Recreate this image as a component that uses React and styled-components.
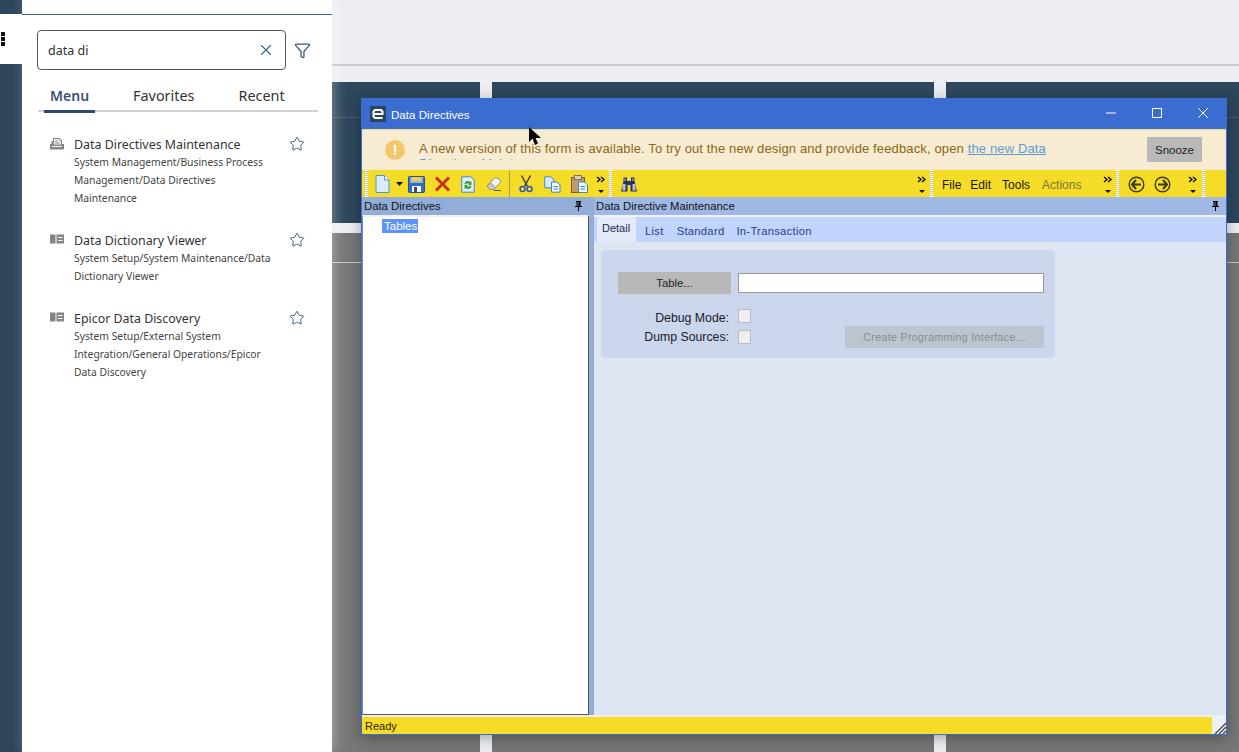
import React from "react";
import styled, { createGlobalStyle } from "styled-components";
import { X, Funnel, Star } from "lucide-react";

const Global = createGlobalStyle`
  html, body { margin: 0; padding: 0; background: #eeeff4; overflow: hidden; }
  * { box-sizing: border-box; }
`;

const panelFont = `"Noto Sans", "Liberation Sans", sans-serif`;
const winFont = `"Liberation Sans", Arial, sans-serif`;

const Page = styled.div`
  position: relative;
  width: 1239px;
  height: 752px;
  display: flex;
  overflow: hidden;
  background: #eeeff4;
`;

const Rail = styled.div`
  width: 22px;
  background: #2e475d;
  padding-top: 14px;
  flex: none;
`;
const RailTab = styled.div`
  height: 50px;
  background: #fff;
  padding: 18px 0 0 1px;
  display: flex;
  flex-direction: column;
  gap: 1px;
`;
const Dot = styled.i`
  display: block;
  width: 4px;
  height: 4px;
  background: #111;
`;

const Panel = styled.aside`
  position: relative;
  z-index: 2;
  width: 310px;
  flex: none;
  background: #fff;
  padding-top: 14px;
  box-shadow: 3px 0 12px rgba(255, 255, 255, 0.32);
  font-family: ${panelFont};
`;
const PanelInner = styled.div`
  border-top: 1px solid #3f6290;
  padding: 15px 14px 0 15px;
`;
const SearchRow = styled.div`
  display: flex;
  align-items: center;
  gap: 8px;
`;
const SearchBox = styled.div`
  width: 249px;
  height: 40px;
  border: 1px solid #555;
  border-radius: 4px;
  display: flex;
  align-items: center;
  justify-content: space-between;
  padding: 0 10px 0 10px;
  font-size: 12.5px;
  color: #333;
`;
const Tabs = styled.div`
  display: flex;
  height: 31px;
  margin: 11px 0 0 1px;
  border-bottom: 2px solid #d2d2d2;
  width: 280px;
  font-size: 14.4px;
  line-height: 20px;
  color: #333;
  padding-top: 5px;
`;
const Tab = styled.div`
  position: relative;
  margin-left: ${(p) => p.$left}px;
  height: 24px;
  ${(p) =>
    p.$active &&
    `
    font-weight: 600;
    font-size: 14px;
    color: #3a5272;
    &::after {
      content: "";
      position: absolute;
      left: -6px;
      right: -6px;
      bottom: -3px;
      height: 3px;
      background: #2f4a70;
    }
  `}
`;
const Results = styled.div`
  padding: 23px 0 0 13px;
`;
const Item = styled.div`
  display: flex;
  margin-bottom: 24px;
`;
const ItemIcon = styled.div`
  width: 24px;
  flex: none;
  padding-top: 3px;
  line-height: 0;
`;
const ItemBody = styled.div`
  width: 206px;
  flex: none;
`;
const ItemTitle = styled.div`
  font-size: 12.4px;
  line-height: 18px;
  color: #333;
  padding-top: 1px;
  height: 18px;
`;
const ItemPath = styled.div`
  font-size: 10.3px;
  line-height: 18px;
  color: #444;
`;
const StarSlot = styled.div`
  padding: 1px 0 0 9px;
  line-height: 0;
  color: #3e5f85;
`;

const Main = styled.main`
  flex: 1;
  display: flex;
  flex-direction: column;
  min-width: 0;
`;
const TopBand = styled.div`
  height: 82px;
  flex: none;
  padding-top: 64px;
`;
const TopLine = styled.div`
  height: 2px;
  background: #c9c9ce;
`;
const CardGrid = styled.div`
  flex: 1;
  display: grid;
  grid-template-columns: 148px 442px 293px;
  grid-template-rows: 141px 1fr;
  gap: 10px 12px;
  margin-right: -16px;
  width: 907px;
`;
const Card = styled.div`
  background: ${(p) => (p.$dark ? "#2e475d" : "#777")};
`;
const CardHead = styled.div`
  height: ${(p) => p.$h}px;
  border-bottom: 1px solid ${(p) => (p.$dark ? "#4a6071" : "#c8c8c8")};
`;

const Win = styled.section`
  position: absolute;
  z-index: 3;
  left: 361px;
  top: 98px;
  width: 866px;
  height: 637px;
  border: 1px solid #3b6dd1;
  background: #eef0f4;
  box-shadow: 0 3px 14px rgba(0, 0, 0, 0.32);
  display: flex;
  flex-direction: column;
  font-family: ${winFont};
  color: #111;
`;
const TitleBar = styled.header`
  height: 30px;
  flex: none;
  background: #3b6dd1;
  display: flex;
  align-items: center;
  padding-left: 8px;
  color: #fff;
  font-size: 11.6px;
`;
const TitleText = styled.span`
  margin-left: 5px;
  flex: 1;
`;
const WinBtn = styled.div`
  width: 46px;
  display: flex;
  justify-content: center;
  line-height: 0;
  margin-top: -2px;
`;
const Banner = styled.div`
  height: 41px;
  flex: none;
  background: #f7ecd2;
  border-top: 1px solid #e8d98a;
  display: flex;
  padding: 7px 24px 0 23px;
`;
const AlertDot = styled.div`
  width: 20px;
  height: 20px;
  margin-top: 3px;
  border-radius: 50%;
  background: #f2c76c;
  color: #fff;
  font-size: 14px;
  font-weight: 700;
  line-height: 20px;
  text-align: center;
  flex: none;
`;
const BannerText = styled.div`
  width: 640px;
  margin: 4px 0 0 14px;
  height: 19px;
  overflow: hidden;
  font-size: 13px;
  line-height: 15px;
  color: #8b6617;
  letter-spacing: 0.135px;
`;
const BannerLink = styled.span`
  color: #5b9bd8;
  text-decoration: underline;
`;
const Snooze = styled.div`
  margin-left: auto;
  width: 55px;
  height: 25px;
  background: #b9b9b9;
  font-size: 11.5px;
  line-height: 26px;
  text-align: center;
  color: #222;
`;

const Toolbar = styled.div`
  height: 27px;
  flex: none;
  background: #f5dc27;
  display: flex;
  align-items: stretch;
  padding-left: 3px;
`;
const Grip = styled.div`
  width: 3px;
  flex: none;
  background: repeating-linear-gradient(#fff 0 1px, #c8c8c0 1px 2px);
`;
const ToolGroup = styled.div`
  width: ${(p) => p.$w}px;
  flex: none;
  display: flex;
  align-items: center;
  padding-left: ${(p) => p.$pad || 0}px;
`;
const Slot = styled.div`
  width: ${(p) => p.$w || 26}px;
  flex: none;
  display: flex;
  justify-content: center;
  line-height: 0;
  padding-top: 1px;
`;
const Sep = styled.div`
  width: 1px;
  height: 26px;
  margin: 0 3px 0 2px;
  background: #9a9a6a;
  flex: none;
`;
const More = styled.div`
  margin-left: auto;
  margin-right: ${(p) => p.$mr ?? 3}px;
  width: 10px;
  line-height: 0;
`;
const MenuItem = styled.span`
  font-size: 12px;
  padding-top: 2px;
  margin-right: ${(p) => p.$gap}px;
  color: ${(p) => (p.$off ? "#7d7440" : "#1c1400")};
`;

const Body = styled.div`
  flex: 1;
  display: flex;
  min-height: 0;
`;
const LeftDock = styled.div`
  width: 232px;
  flex: none;
  display: flex;
  flex-direction: column;
  background: #93add9;
  padding-right: 5px;
`;
const DockHead = styled.div`
  height: 18px;
  flex: none;
  margin-right: ${(p) => p.$mr || 0}px;
  background: ${(p) => p.$bg};
  display: flex;
  align-items: center;
  justify-content: space-between;
  padding: 0 ${(p) => p.$pr}px 0 2px;
  font-size: 11.3px;
  color: #111;
`;
const TreeWrap = styled.div`
  flex: 1;
  background: #fff;
  border: 1px solid #555;
  border-left-color: #6d8cc4;
  border-top: 2px solid #eef0f6;
  padding: 2px 0 0 19px;
`;
const Node = styled.span`
  display: inline-block;
  height: 14px;
  background: #5b93fb;
  color: #fff;
  font-size: 11.5px;
  line-height: 14px;
  padding: 0 1px 0 2px;
  vertical-align: top;
`;
const RightDock = styled.div`
  flex: 1;
  display: flex;
  flex-direction: column;
  min-width: 0;
`;
const TabStrip = styled.div`
  height: 26px;
  flex: none;
  margin-top: 1px;
  background: #c1d5fb;
  border-top: 1px solid #eef2fb;
  display: flex;
  padding-left: 3px;
  font-size: 11.2px;
  letter-spacing: 0.3px;
  color: #2b3a8f;
`;
const WinTab = styled.div`
  margin-right: ${(p) => p.$gap}px;
  padding: 8px 0 0;
  ${(p) =>
    p.$active &&
    `
    width: 39px;
    padding: 5px 0 0 5px;
    background: #e3eaf8;
    border-radius: 3px 3px 0 0;
    color: #1d2c55;
    font-size: 11px;
    letter-spacing: 0;
  `}
`;
const Content = styled.div`
  flex: 1;
  background: #dfe6f3;
  padding: 8px 0 0 7px;
`;
const Group = styled.div`
  width: 454px;
  height: 108px;
  background: #c9d6ec;
  border-radius: 4px;
  padding: 22px 11px 0 17px;
  font-size: 12.3px;
`;
const TableRow = styled.div`
  display: flex;
  align-items: center;
  gap: 7px;
  margin-bottom: 15px;
`;
const GreyBtn = styled.div`
  width: ${(p) => p.$w}px;
  height: 22px;
  background: ${(p) => (p.$off ? "#bcc4d0" : "#b8b8b8")};
  color: ${(p) => (p.$off ? "#868b92" : "#222")};
  font-size: ${(p) => (p.$off ? "10.5px" : "11.3px")};
  line-height: 22px;
  text-align: center;
  letter-spacing: ${(p) => (p.$off ? "0.4px" : "0")};
`;
const TextInput = styled.div`
  width: 306px;
  height: 20px;
  background: #fff;
  border: 1px solid #999;
`;
const CheckRow = styled.div`
  display: flex;
  align-items: flex-start;
  height: 21px;
`;
const CheckLabel = styled.div`
  width: 111px;
  text-align: right;
  line-height: 16px;
  margin-top: ${(p) => p.$t}px;
  color: #1a1a2a;
`;
const Check = styled.div`
  width: 13px;
  height: 14px;
  margin-left: 9px;
  background: #eeeeee;
  border: 1px solid #b9bcc2;
`;
const CreateSlot = styled.div`
  margin: -4px 0 0 auto;
`;
const StatusRow = styled.footer`
  height: 19px;
  flex: none;
  padding-top: 2px;
  display: flex;
  background: #eeeff2;
`;
const Status = styled.div`
  width: 850px;
  background: #f7dc27;
  font-size: 11px;
  line-height: 19px;
  padding-left: 3px;
  color: #2a2408;
`;
const ResizeGrip = styled.div`
  margin-left: auto;
  align-self: flex-end;
  line-height: 0;
`;
const Cursor = styled.svg`
  position: absolute;
  z-index: 5;
  left: 528px;
  top: 126px;
`;

const Chevrons = () => (
  <svg width="10" height="22" viewBox="0 0 10 22">
    <path d="M1 4l3 2.5L1 9M5 4l3 2.5L5 9" fill="none" stroke="#111" strokeWidth="1.4" />
    <path d="M2 17h6l-3 3z" fill="#111" />
  </svg>
);
const Pin = () => (
  <svg width="9" height="11" viewBox="0 0 9 11">
    <path d="M2 0h5v1H6.500v4H8v1H5v4H4V6H1V5h1.500V1H2z" fill="#000" />
    <path d="M3.500 1h1v4h-1z" fill="#fff" opacity=".5" />
  </svg>
);
const Doc = () => (
  <svg width="15" height="18" viewBox="0 0 15 18">
    <path d="M1 .5h8.500l4.500 4.500v12.500H1z" fill="#dcebfb" stroke="#4b94de" />
    <path d="M9.500 .5V5H14" fill="#fff" stroke="#4b94de" />
  </svg>
);
const Floppy = () => (
  <svg width="17" height="17" viewBox="0 0 17 17">
    <rect x=".5" y=".5" width="16" height="16" rx="1" fill="#2f6ec6" stroke="#24558f" />
    <rect x="2" y="1" width="13" height="6" fill="#9fb4c8" />
    <rect x="4" y="1" width="9" height="4" fill="#f2cf5a" />
    <rect x="4" y="10" width="9" height="6" fill="#fff" />
    <rect x="6" y="11" width="3" height="5" fill="#2a4f86" />
  </svg>
);
const RedX = () => (
  <svg width="17" height="16" viewBox="0 0 17 16">
    <path d="M2 1.500l13 13M15 1.500L2 14.500" stroke="#c9321a" strokeWidth="3" />
  </svg>
);
const Refresh = () => (
  <svg width="14" height="17" viewBox="0 0 14 17">
    <path d="M.8 .8h9l3.400 3.400v12H.8z" fill="#e4f0fa" stroke="#3f85cf" />
    <path d="M3.500 8a3.500 3.500 0 0 1 6-2l1-1v4H7l1-1a2 2 0 0 0-3 .5zM10.500 10a3.500 3.500 0 0 1-6 2l-1 1V9h3.500l-1 1a2 2 0 0 0 3-.5z" fill="#38a238" />
  </svg>
);
const Eraser = () => (
  <svg width="16" height="15" viewBox="0 0 16 15">
    <path d="M1 9l7-7.500c1-1 2-1 3-.5l3 2c1 .8 1 1.800 .2 2.600L8 12.500H4z" fill="#f3f3f3" stroke="#8a8a8a" />
    <path d="M1 9l3 3.500h4l1.500-2L4.500 6z" fill="#c9c9c9" stroke="#8a8a8a" />
    <path d="M8 13.500h7" stroke="#5c5c40" />
  </svg>
);
const Scissors = () => (
  <svg width="14" height="18" viewBox="0 0 14 18">
    <path d="M2.500 .5l6 11M11.500 .5l-6 11" stroke="#3d3d3d" strokeWidth="1.500" />
    <circle cx="3.500" cy="14" r="2.500" fill="none" stroke="#2d55c8" strokeWidth="1.500" />
    <circle cx="10.500" cy="14" r="2.500" fill="none" stroke="#2d55c8" strokeWidth="1.500" />
  </svg>
);
const Copy = () => (
  <svg width="17" height="17" viewBox="0 0 17 17">
    <path d="M.8 .8h6l3 3v8H.8z" fill="#dcebfb" stroke="#3f85cf" />
    <path d="M7.500 6h5.500l3 3v7.200H7.500z" fill="#eef6fd" stroke="#3f85cf" />
    <path d="M9.500 10.500h4.500M9.500 13h4.500" stroke="#3f85cf" />
  </svg>
);
const Paste = () => (
  <svg width="17" height="18" viewBox="0 0 17 18">
    <rect x=".5" y="2.500" width="13" height="15" fill="#c09a70" stroke="#7d5a38" />
    <rect x="3.500" y=".5" width="7" height="4" fill="#d8d0b8" stroke="#7d7060" />
    <path d="M7.500 7h6l3 3v7.500h-9z" fill="#eef6fd" stroke="#3f85cf" />
    <path d="M9.500 11.500h4.500M9.500 14h4.500" stroke="#3f85cf" />
  </svg>
);
const Binoculars = () => (
  <svg width="16" height="15" viewBox="0 0 16 15">
    <path d="M2.500 .5h3.500v3.500h4V.5h3.500v3.500L16 14.500H9.500V8h-3v6.500H0L2.500 4z" fill="#2b3168" />
    <path d="M1.500 7h3v6.500h-3zM11.500 7h3v6.500h-3z" fill="#bac2da" />
    <path d="M3.500 1.500h1V4h-1zM11.500 1.500h1V4h-1z" fill="#c9cfe4" />
  </svg>
);
const NavArrow = ({ flip }) => (
  <svg width="17" height="17" viewBox="0 0 17 17" transform={flip ? "scale(-1 1)" : undefined}>
    <circle cx="8.500" cy="8.500" r="7.300" fill="none" stroke="#3d3610" strokeWidth="1.400" />
    <path d="M8 4L4 8.500 8 13M4.500 8.500H13" fill="none" stroke="#3d3610" strokeWidth="2" />
  </svg>
);
const ListGlyph = () => (
  <svg width="14" height="10" viewBox="0 0 14 10">
    <path d="M0 .5h5.500v9H0zM6.500 .5H14v9H6.500z" fill="#858585" />
    <path d="M8 3.500h4.500M8 6.500h4.500" stroke="#fff" />
  </svg>
);
const StackGlyph = () => (
  <svg width="14" height="12" viewBox="0 0 14 12">
    <path d="M0 6h1.500V3H3V0h6l3 2.500V6h2v5.500H0z" fill="#858585" />
    <path d="M4 1h4.500l2.500 2.500V6.500H4z" fill="#fff" />
    <path d="M5 3h3M5 5h5" stroke="#858585" />
    <path d="M2 8.500h10" stroke="#fff" />
  </svg>
);
const Logo = () => (
  <svg width="16" height="16" viewBox="0 0 16 16">
    <rect width="16" height="16" fill="#2a4560" />
    <path d="M3 8h9.500V5.500L11 4H5L3.500 5.500v5L5 12h7.500" fill="none" stroke="#fff" strokeWidth="2" />
  </svg>
);

const results = [
  {
    icon: <StackGlyph />,
    title: "Data Directives Maintenance",
    path: ["System Management/Business Process", "Management/Data Directives", "Maintenance"],
  },
  {
    icon: <ListGlyph />,
    title: "Data Dictionary Viewer",
    path: ["System Setup/System Maintenance/Data", "Dictionary Viewer"],
  },
  {
    icon: <ListGlyph />,
    title: "Epicor Data Discovery",
    path: ["System Setup/External System", "Integration/General Operations/Epicor", "Data Discovery"],
  },
];

export default function App() {
  return (
    <Page>
      <Global />
      <Rail>
        <RailTab>
          <Dot />
          <Dot />
          <Dot />
        </RailTab>
      </Rail>
      <Panel>
        <PanelInner>
          <SearchRow>
            <SearchBox>
              <span>data di</span>
              <X size={18} strokeWidth={1.5} color="#3f6290" />
            </SearchBox>
            <Funnel size={17} strokeWidth={1.8} color="#3b556f" />
          </SearchRow>
          <Tabs>
            <Tab $active $left={12}>Menu</Tab>
            <Tab $left={44}>Favorites</Tab>
            <Tab $left={44}>Recent</Tab>
          </Tabs>
          <Results>
            {results.map((r) => (
              <Item key={r.title}>
                <ItemIcon>{r.icon}</ItemIcon>
                <ItemBody>
                  <ItemTitle>{r.title}</ItemTitle>
                  {r.path.map((line) => (
                    <ItemPath key={line}>{line}</ItemPath>
                  ))}
                </ItemBody>
                <StarSlot>
                  <Star size={16} strokeWidth={1.5} />
                </StarSlot>
              </Item>
            ))}
          </Results>
        </PanelInner>
      </Panel>
      <Main>
        <TopBand>
          <TopLine />
        </TopBand>
        <CardGrid>
          <Card $dark><CardHead $dark $h={36} /></Card>
          <Card $dark><CardHead $dark $h={36} /></Card>
          <Card $dark><CardHead $dark $h={36} /></Card>
          <Card><CardHead $h={30} /></Card>
          <Card><CardHead $h={30} /></Card>
          <Card><CardHead $h={30} /></Card>
        </CardGrid>
      </Main>

      <Win>
        <TitleBar>
          <Logo />
          <TitleText>Data Directives</TitleText>
          <WinBtn>
            <svg width="12" height="12" viewBox="0 0 12 12"><path d="M1 6h10" stroke="#fff" /></svg>
          </WinBtn>
          <WinBtn>
            <svg width="12" height="12" viewBox="0 0 12 12"><rect x="1.500" y="1.500" width="9" height="9" fill="none" stroke="#fff" /></svg>
          </WinBtn>
          <WinBtn>
            <svg width="12" height="12" viewBox="0 0 12 12"><path d="M1 1l10 10M11 1L1 11" stroke="#fff" /></svg>
          </WinBtn>
        </TitleBar>
        <Banner>
          <AlertDot>!</AlertDot>
          <BannerText>
            A new version of this form is available. To try out the new design and provide feedback, open{" "}
            <BannerLink>the new Data Directives Maintenance</BannerLink>
          </BannerText>
          <Snooze>Snooze</Snooze>
        </Banner>
        <Toolbar>
          <Grip />
          <ToolGroup $w={241} $pad={1}>
            <Slot><Doc /></Slot>
            <Slot $w={8}>
              <svg width="7" height="4" viewBox="0 0 7 4"><path d="M0 0h7L3.500 4z" fill="#111" /></svg>
            </Slot>
            <Slot><Floppy /></Slot>
            <Slot><RedX /></Slot>
            <Slot><Refresh /></Slot>
            <Slot><Eraser /></Slot>
            <Sep />
            <Slot><Scissors /></Slot>
            <Slot $w={27}><Copy /></Slot>
            <Slot><Paste /></Slot>
            <More><Chevrons /></More>
          </ToolGroup>
          <Grip />
          <ToolGroup $w={318} $pad={9}>
            <Slot $w={16}><Binoculars /></Slot>
            <More><Chevrons /></More>
          </ToolGroup>
          <Grip />
          <ToolGroup $w={183} $pad={9}>
            <MenuItem $gap={9}>File</MenuItem>
            <MenuItem $gap={11}>Edit</MenuItem>
            <MenuItem $gap={12}>Tools</MenuItem>
            <MenuItem $off $gap={0}>Actions</MenuItem>
            <More><Chevrons /></More>
          </ToolGroup>
          <Grip />
          <ToolGroup $w={83} $pad={4}>
            <Slot><NavArrow /></Slot>
            <Slot><NavArrow flip /></Slot>
            <More $mr={4}><Chevrons /></More>
          </ToolGroup>
          <Grip />
        </Toolbar>
        <Body>
          <LeftDock>
            <DockHead $bg="#93add9" $pr={11} $mr={-5}>
              <span>Data Directives</span>
              <Pin />
            </DockHead>
            <TreeWrap>
              <Node>Tables</Node>
            </TreeWrap>
          </LeftDock>
          <RightDock>
            <DockHead $bg="#a0b8e6" $pr={6}>
              <span>Data Directive Maintenance</span>
              <Pin />
            </DockHead>
            <TabStrip>
              <WinTab $active $gap={9}>Detail</WinTab>
              <WinTab $gap={13}>List</WinTab>
              <WinTab $gap={12}>Standard</WinTab>
              <WinTab $gap={0}>In-Transaction</WinTab>
            </TabStrip>
            <Content>
              <Group>
                <TableRow>
                  <GreyBtn $w={113}>Table...</GreyBtn>
                  <TextInput />
                </TableRow>
                <CheckRow>
                  <CheckLabel $t={1}>Debug Mode:</CheckLabel>
                  <Check />
                </CheckRow>
                <CheckRow>
                  <CheckLabel $t={-1}>Dump Sources:</CheckLabel>
                  <Check />
                  <CreateSlot>
                    <GreyBtn $off $w={199}>Create Programming Interface...</GreyBtn>
                  </CreateSlot>
                </CheckRow>
              </Group>
            </Content>
          </RightDock>
        </Body>
        <StatusRow>
          <Status>Ready</Status>
          <ResizeGrip>
            <svg width="12" height="12" viewBox="0 0 12 12">
              <path d="M12 1L1 12M12 5l-7 7M12 9l-3 3" stroke="#444" strokeWidth="1.300" />
            </svg>
          </ResizeGrip>
        </StatusRow>
      </Win>
      <Cursor width="14" height="22" viewBox="0 0 14 22">
        <path d="M1 1v15l3.500-3.500L7 19l3-1.500-2.500-5.500H13z" fill="#000" />
      </Cursor>
    </Page>
  );
}
